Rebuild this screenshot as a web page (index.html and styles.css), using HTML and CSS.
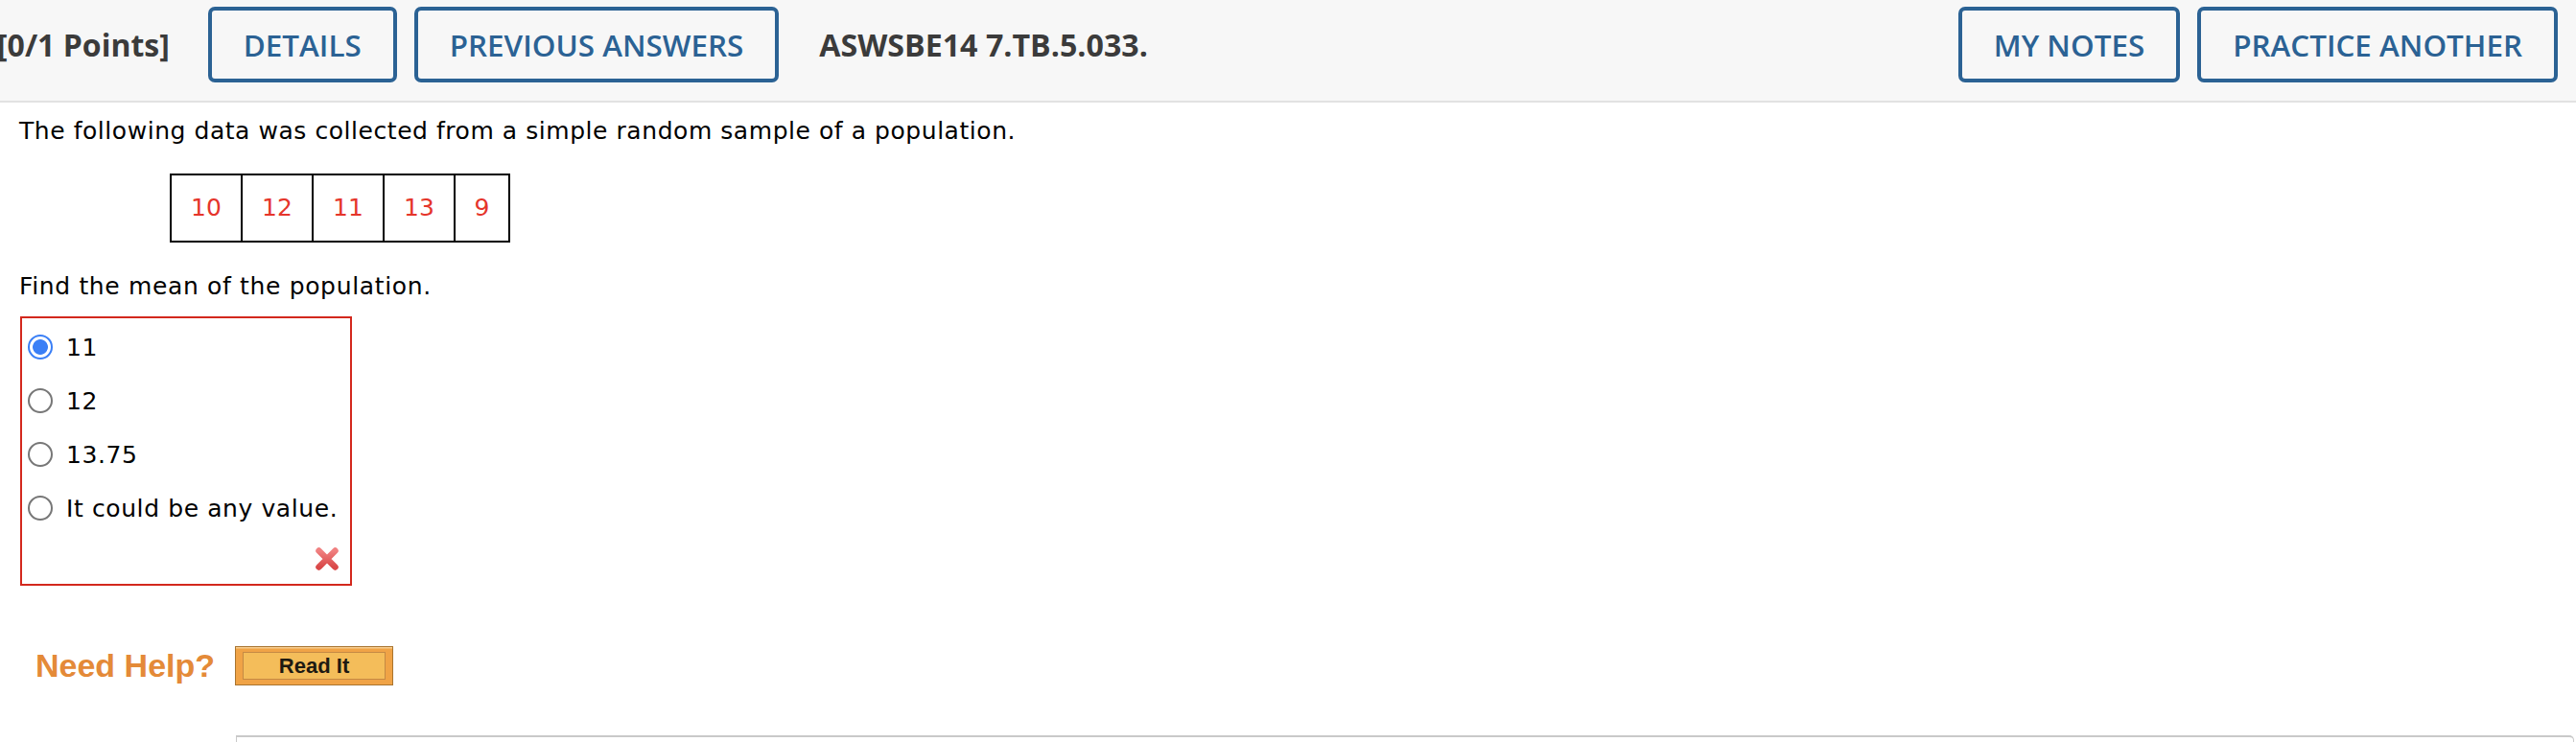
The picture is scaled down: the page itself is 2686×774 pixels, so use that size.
FILE: index.html
```html
<!DOCTYPE html>
<html lang="en">
<head>
<meta charset="utf-8">
<title>ASWSBE14 7.TB.5.033.</title>
<link rel="stylesheet" href="styles.css">
</head>
<body>
<header class="qhead">
  <span class="points">[0/1 Points]</span>
  <button class="hbtn">DETAILS</button>
  <button class="hbtn">PREVIOUS ANSWERS</button>
  <span class="qcode">ASWSBE14 7.TB.5.033.</span>
  <button class="hbtn push">MY NOTES</button>
  <button class="hbtn">PRACTICE ANOTHER</button>
</header>
<main class="content">
  <p class="qtext first">The following data was collected from a simple random sample of a population.</p>
  <table class="data">
    <tr><td>10</td><td>12</td><td>11</td><td>13</td><td class="narrow">9</td></tr>
  </table>
  <p class="qtext find">Find the mean of the population.</p>
  <div class="answers">
    <label class="opt"><input type="radio" name="m" checked><span>11</span></label>
    <label class="opt"><input type="radio" name="m"><span>12</span></label>
    <label class="opt"><input type="radio" name="m"><span>13.75</span></label>
    <label class="opt"><input type="radio" name="m"><span>It could be any value.</span></label>
    <div class="mark">
      <svg width="26" height="26" viewBox="0 0 26 26" aria-hidden="true">
        <defs>
          <linearGradient id="xg" x1="0" y1="0" x2="0" y2="1">
            <stop offset="0" stop-color="#f08080"/>
            <stop offset="1" stop-color="#d94848"/>
          </linearGradient>
        </defs>
        <path d="M4.5 4.5 L21.5 21.5 M21.5 4.5 L4.5 21.5" stroke="url(#xg)" stroke-width="6.5" stroke-linecap="round"/>
      </svg>
    </div>
  </div>
  <div class="help">
    <span class="need">Need Help?</span>
    <button class="readit"><span class="readit-in">Read It</span></button>
  </div>
  <div class="nextbox"></div>
</main>
</body>
</html>
```
FILE: styles.css
```css
html, body {
  margin: 0;
  padding: 0;
  background: #ffffff;
}
body {
  font-family: "DejaVu Sans", Verdana, sans-serif;
  color: #000;
  overflow: hidden;
}
.qhead {
  display: flex;
  align-items: center;
  background: #f7f7f7;
  border-bottom: 2px solid #e2e2e2;
  padding: 7px 19px 19px 0;
  font-family: "Open Sans", sans-serif;
}
.points {
  font-weight: 700;
  font-size: 32px;
  color: #3b3b3b;
  margin-left: -3px;
  margin-right: 40px;
}
.hbtn {
  font-family: "Open Sans", sans-serif;
  font-weight: 600;
  font-size: 31.4px;
  line-height: 43px;
  color: #2b6294;
  background: #f7f7f7;
  border: 4px solid #2b6294;
  border-radius: 7px;
  padding: 14px 33px;
  margin: 0 18px 0 0;
  white-space: nowrap;
}
.hbtn:last-child { margin-right: 0; }
.qcode {
  font-weight: 700;
  font-size: 32.2px;
  color: #3b3b3b;
  margin-left: 24px;
}
.push { margin-left: auto; }
.content {
  padding: 0 2px 0 20px;
}
.qtext {
  font-size: 25px;
  letter-spacing: 0.55px;
  line-height: 30px;
  margin: 0;
}
.first { margin-top: 15px; }
.data {
  border-collapse: collapse;
  margin: 29px 0 0 157px;
}
.data td {
  border: 2px solid #000;
  color: #e5352b;
  font-size: 25px;
  line-height: 30px;
  padding: 19px 0;
  width: 72px;
  text-align: center;
}
.data td.narrow { width: 55px; }
.find { margin-top: 31px; letter-spacing: 0.65px; }
.answers {
  width: 342px;
  border: 2px solid #d3281d;
  margin: 16px 0 0 1px;
  padding: 2px 0 13px 0;
}
.opt {
  display: flex;
  align-items: center;
  height: 56px;
  font-size: 25px;
  letter-spacing: 0.6px;
  padding-left: 6px;
}
.opt input {
  appearance: none;
  -webkit-appearance: none;
  width: 26px;
  height: 26px;
  margin: 0 14px 0 0;
  border: 2px solid #777;
  border-radius: 50%;
  background: #fff;
  box-sizing: border-box;
  flex: none;
}
.opt input:checked {
  border: 2.5px solid #3a7ff6;
  background: radial-gradient(circle, #3a7ff6 0, #3a7ff6 7.5px, #fff 8.3px);
}
.mark {
  display: flex;
  justify-content: flex-end;
  padding: 12px 11px 0 0;
}
.mark svg { display: block; }
.help {
  display: flex;
  align-items: center;
  margin-top: 63px;
  padding-left: 17px;
}
.need {
  font-family: "Liberation Sans", Arial, sans-serif;
  font-weight: 700;
  font-size: 34px;
  color: #e48a38;
  margin-right: 21px;
}
.readit {
  width: 165px;
  height: 41px;
  padding: 5px 7px;
  border: 1px solid #a9742f;
  background: #f0a346;
  box-shadow: inset 0 1px 0 #f8cf93, inset 0 2px 0 #f4b868;
  display: flex;
  box-sizing: border-box;
}
.readit-in {
  flex: 1;
  display: flex;
  align-items: center;
  justify-content: center;
  border: 1px solid #c58a44;
  background: #f4bd5a;
  font-family: "Liberation Sans", Arial, sans-serif;
  font-weight: 700;
  font-size: 22px;
  color: #1e1a12;
}
.nextbox {
  margin: 52px 0 0 226px;
  height: 40px;
  border-top: 2px solid #c9c9c9;
  border-left: 1px solid #c9c9c9;
  border-right: 1px solid #c9c9c9;
  border-radius: 0 5px 0 0;
}
```
